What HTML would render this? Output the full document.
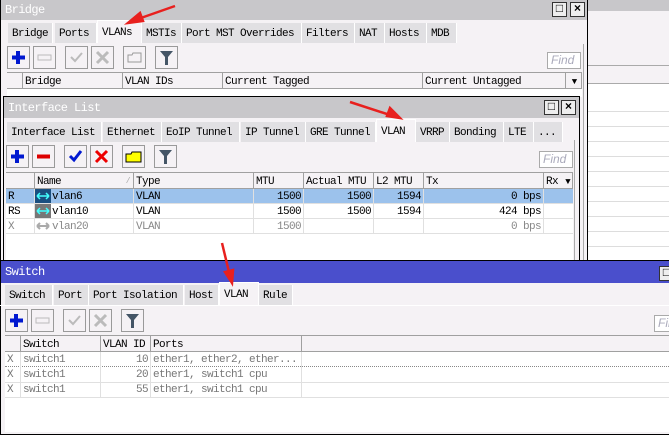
<!DOCTYPE html><html><head><style>
*{margin:0;padding:0;box-sizing:border-box}
body{width:669px;height:432px;overflow:hidden;background:#fff;position:relative;font-family:"Liberation Mono","Noto Sans CJK SC",monospace;font-size:11px;letter-spacing:-0.6px;color:#000}
.a{position:absolute}
.win{position:absolute;background:#f5f2f5;border:1px solid #000}
.tb{position:absolute;left:0;right:0;top:0;background:#c8c7ca;color:#fff;font-size:12px;padding-left:4px;line-height:22px;height:21px}
.tab{position:absolute;background:#e1e0e3;border-right:1px solid #fff;height:20px;line-height:22px;padding-left:4px;white-space:nowrap}
.tab.act{background:#f5f2f5;height:23px;line-height:24px;border:1px solid #fff;border-bottom:none}
.btn{position:absolute;width:23px;height:23px;border:1px solid #9a9a9a;background:#f5f2f5}
.hd{position:absolute;height:17px;border-right:1px solid #a0a0a0;border-bottom:1px solid #a0a0a0;border-top:1px solid #a0a0a0;background:#f5f2f5;line-height:18px;padding-left:2px;white-space:nowrap;overflow:hidden}
.c{position:absolute;height:15px;line-height:16px;border-right:1px solid #e0e0e0;padding:0 2px;white-space:nowrap;overflow:hidden}
.r{text-align:right}
.find{position:absolute;border:1px solid #aaa;background:#fff;color:#aab;font-family:"Liberation Sans",sans-serif;font-style:italic;font-size:12px;letter-spacing:0;padding-left:3px;line-height:15px;height:17px}
.wb{position:absolute;width:15px;height:15px;border:1px solid #333;background:#eee;font-size:12px;line-height:13px;text-align:center;font-weight:bold;letter-spacing:0}
.ic{display:inline-block;vertical-align:top;width:16px;height:14px;margin-right:1px}
</style></head><body>
<!-- background window right -->
<div class="a" style="left:588px;top:0;width:81px;height:11px;background:#c8c7ca"></div>
<div class="a" style="left:588px;top:11px;width:81px;height:54px;background:#f5f2f5"></div>
<div class="a" style="left:588px;top:65px;width:81px;height:1px;background:#aaa"></div>
<div class="a" style="left:588px;top:66px;width:81px;height:17px;background:#f5f2f5"></div>
<div class="a" style="left:588px;top:83px;width:81px;height:1px;background:#aaa"></div>
<div class="a" style="left:588px;top:97px;width:81px;height:150px;background:repeating-linear-gradient(#fff 0 14px,#ddd 14px 15px)"></div>

<!-- Bridge window -->
<div class="win" style="left:0;top:-2px;width:588px;height:266px">
<div class="tb" style="top:1px;height:20px;line-height:20px">Bridge</div>
<div class="wb" style="left:551px;top:3px">□</div><div class="wb" style="left:569px;top:3px">×</div>
<div class="tab" style="left:7px;top:24px;width:45px">Bridge</div>
<div class="tab" style="left:54px;top:24px;width:42px">Ports</div>
<div class="tab act" style="left:96px;top:21px;width:45px">VLANs</div>
<div class="tab" style="left:141px;top:24px;width:40px">MSTIs</div>
<div class="tab" style="left:181px;top:24px;width:120px">Port MST Overrides</div>
<div class="tab" style="left:301px;top:24px;width:53px">Filters</div>
<div class="tab" style="left:354px;top:24px;width:30px">NAT</div>
<div class="tab" style="left:384px;top:24px;width:42px">Hosts</div>
<div class="tab" style="left:426px;top:24px;width:30px">MDB</div>
</div>
<div class="a" style="left:583px;top:44px;width:1px;height:220px;background:#aaa"></div>
<div class="btn" style="left:7px;top:46px"><svg width="21" height="21"><path d="M10 4v13M4 10.5h13" stroke="#0018d0" stroke-width="4"/></svg></div>
<div class="btn" style="left:33px;top:46px"><svg width="21" height="21"><rect x="4" y="8" width="13" height="5" fill="none" stroke="#bbb"/></svg></div>
<div class="btn" style="left:65px;top:46px"><svg width="21" height="21"><path d="M5 10l4 4 7-8" fill="none" stroke="#bbb" stroke-width="2"/></svg></div>
<div class="btn" style="left:91px;top:46px"><svg width="21" height="21"><path d="M5 5l11 11M16 5L5 16" stroke="#bbb" stroke-width="3"/></svg></div>
<div class="btn" style="left:123px;top:46px"><svg width="21" height="21"><path d="M4 8h4l1-2h8v9H4z" fill="none" stroke="#999"/></svg></div>
<div class="btn" style="left:155px;top:46px"><svg width="21" height="21"><path d="M4 4h13l-5 6v8h-3v-8z" fill="#456"/></svg></div>
<div class="find" style="left:547px;top:52px;width:34px">Find</div>
<div class="hd" style="left:7px;top:72px;width:16px"></div>
<div class="hd" style="left:23px;top:72px;width:100px">Bridge</div>
<div class="hd" style="left:123px;top:72px;width:100px">VLAN IDs</div>
<div class="hd" style="left:223px;top:72px;width:200px">Current Tagged</div>
<div class="hd" style="left:423px;top:72px;width:143px">Current Untagged</div>
<div class="hd" style="left:566px;top:72px;width:16px;font-size:9px;text-align:center;letter-spacing:0">▼</div>
<div class="a" style="left:7px;top:89px;width:575px;height:8px;background:#fff"></div>

<!-- Interface List window -->
<div class="win" style="left:3px;top:96px;width:577px;height:170px">
<div class="tb">Interface List</div>
<div class="wb" style="left:540px;top:3px">□</div><div class="wb" style="left:557px;top:3px">×</div>
</div>
<div class="a" style="left:574px;top:140px;width:1px;height:120px;background:#aaa"></div>
<div class="tab" style="left:7px;top:122px;width:95px">Interface List</div>
<div class="tab" style="left:103px;top:122px;width:59px">Ethernet</div>
<div class="tab" style="left:162px;top:122px;width:78px">EoIP Tunnel</div>
<div class="tab" style="left:241px;top:122px;width:65px">IP Tunnel</div>
<div class="tab" style="left:306px;top:122px;width:70px">GRE Tunnel</div>
<div class="tab act" style="left:376px;top:119px;width:40px">VLAN</div>
<div class="tab" style="left:416px;top:122px;width:34px">VRRP</div>
<div class="tab" style="left:450px;top:122px;width:54px">Bonding</div>
<div class="tab" style="left:504px;top:122px;width:30px">LTE</div>
<div class="tab" style="left:534px;top:122px;width:29px">...</div>
<div class="btn" style="left:6px;top:145px"><svg width="21" height="21"><path d="M10 4v13M4 10.5h13" stroke="#0018d0" stroke-width="4"/></svg></div>
<div class="btn" style="left:32px;top:145px"><svg width="21" height="21"><path d="M4 10.5h13" stroke="#d00" stroke-width="4"/></svg></div>
<div class="btn" style="left:64px;top:145px"><svg width="21" height="21"><path d="M5 10l4 4 7-9" fill="none" stroke="#0018d0" stroke-width="3"/></svg></div>
<div class="btn" style="left:90px;top:145px"><svg width="21" height="21"><path d="M5 5l11 11M16 5L5 16" stroke="#e00" stroke-width="3"/></svg></div>
<div class="btn" style="left:122px;top:145px"><svg width="21" height="21"><path d="M3 8h5l1-2h9v10H3z" fill="#ff0" stroke="#000"/></svg></div>
<div class="btn" style="left:154px;top:145px"><svg width="21" height="21"><path d="M4 4h13l-5 6v8h-3v-8z" fill="#456"/></svg></div>
<div class="find" style="left:539px;top:151px;width:34px">Find</div>
<div class="hd" style="left:6px;top:172px;width:29px"></div>
<div class="hd" style="left:35px;top:172px;width:99px">Name<span style="position:absolute;right:3px;color:#aaa;font-size:8px">/</span></div>
<div class="hd" style="left:134px;top:172px;width:120px">Type</div>
<div class="hd" style="left:254px;top:172px;width:50px">MTU</div>
<div class="hd" style="left:304px;top:172px;width:70px">Actual MTU</div>
<div class="hd" style="left:374px;top:172px;width:50px">L2 MTU</div>
<div class="hd" style="left:424px;top:172px;width:120px">Tx</div>
<div class="hd" style="left:544px;top:172px;width:29px">Rx<span style="position:absolute;right:2px;font-size:9px">▼</span></div>
<div class="a" style="left:6px;top:189px;width:567px;height:71px;background:#fff"></div>
<div class="a" style="left:6px;top:189px;width:567px;height:15px;background:#9cc2ec"></div>
<div class="a" style="left:6px;top:203px;width:567px;height:1px;background:#e0e0e0"></div>
<div class="a" style="left:6px;top:218px;width:567px;height:1px;background:#e0e0e0"></div>
<div class="a" style="left:6px;top:233px;width:567px;height:1px;background:#e0e0e0"></div>
<div class="c" style="left:6px;top:189px;width:29px">R</div>
<div class="c" style="left:35px;top:189px;width:99px;padding:0"><svg class="ic"><rect width="16" height="14" fill="#1a4f80"/><path d="M2 7h12M2 7l3-3M2 7l3 3M14 7l-3-3M14 7l-3 3" stroke="#4ff" stroke-width="1.5" fill="none"/></svg>vlan6</div>
<div class="c" style="left:134px;top:189px;width:120px">VLAN</div>
<div class="c r" style="left:254px;top:189px;width:50px">1500</div>
<div class="c r" style="left:304px;top:189px;width:70px">1500</div>
<div class="c r" style="left:374px;top:189px;width:50px">1594</div>
<div class="c r" style="left:424px;top:189px;width:120px">0 bps</div>
<div class="c" style="left:6px;top:204px;width:29px">RS</div>
<div class="c" style="left:35px;top:204px;width:99px;padding:0"><svg class="ic"><rect width="16" height="14" fill="#777"/><path d="M2 7h12M2 7l3-3M2 7l3 3M14 7l-3-3M14 7l-3 3" stroke="#4ff" stroke-width="1.5" fill="none"/></svg>vlan10</div>
<div class="c" style="left:134px;top:204px;width:120px">VLAN</div>
<div class="c r" style="left:254px;top:204px;width:50px">1500</div>
<div class="c r" style="left:304px;top:204px;width:70px">1500</div>
<div class="c r" style="left:374px;top:204px;width:50px">1594</div>
<div class="c r" style="left:424px;top:204px;width:120px">424 bps</div>
<div style="color:#888">
<div class="c" style="left:6px;top:219px;width:29px">X</div>
<div class="c" style="left:35px;top:219px;width:99px;padding:0"><svg class="ic"><path d="M2 7h12M2 7l3-3M2 7l3 3M14 7l-3-3M14 7l-3 3" stroke="#aaa" stroke-width="2" fill="none"/></svg>vlan20</div>
<div class="c" style="left:134px;top:219px;width:120px">VLAN</div>
<div class="c r" style="left:254px;top:219px;width:50px">1500</div>
<div class="c r" style="left:304px;top:219px;width:70px"></div>
<div class="c r" style="left:374px;top:219px;width:50px"></div>
<div class="c r" style="left:424px;top:219px;width:120px">0 bps</div>
</div>

<!-- Switch window -->
<div class="win" style="left:0;top:260px;width:672px;height:175px">
<div class="tb" style="background:#4a4fcc;height:22px;line-height:22px">Switch</div>
<div class="wb" style="left:658px;top:5px">□</div>
</div>
<div class="a" style="left:0;top:305px;width:669px;height:1px;background:#fff"></div>
<div class="tab" style="left:5px;top:285px;width:48px">Switch</div>
<div class="tab" style="left:54px;top:285px;width:35px">Port</div>
<div class="tab" style="left:89px;top:285px;width:95px">Port Isolation</div>
<div class="tab" style="left:185px;top:285px;width:34px">Host</div>
<div class="tab act" style="left:219px;top:282px;width:40px">VLAN</div>
<div class="tab" style="left:259px;top:285px;width:34px">Rule</div>
<div class="btn" style="left:5px;top:309px"><svg width="21" height="21"><path d="M10 4v13M4 10.5h13" stroke="#0018d0" stroke-width="4"/></svg></div>
<div class="btn" style="left:31px;top:309px"><svg width="21" height="21"><rect x="4" y="8" width="13" height="5" fill="none" stroke="#bbb"/></svg></div>
<div class="btn" style="left:63px;top:309px"><svg width="21" height="21"><path d="M5 10l4 4 7-8" fill="none" stroke="#bbb" stroke-width="2"/></svg></div>
<div class="btn" style="left:89px;top:309px"><svg width="21" height="21"><path d="M5 5l11 11M16 5L5 16" stroke="#bbb" stroke-width="3"/></svg></div>
<div class="btn" style="left:121px;top:309px"><svg width="21" height="21"><path d="M4 4h13l-5 6v8h-3v-8z" fill="#456"/></svg></div>
<div class="find" style="left:654px;top:315px;width:30px">Find</div>
<div class="hd" style="left:5px;top:335px;width:16px"></div>
<div class="hd" style="left:21px;top:335px;width:80px">Switch</div>
<div class="hd" style="left:101px;top:335px;width:50px">VLAN ID</div>
<div class="hd" style="left:151px;top:335px;width:151px">Ports</div>
<div class="hd" style="left:302px;top:335px;width:370px"></div>
<div class="a" style="left:5px;top:352px;width:664px;height:80px;background:#fff"></div>
<div class="a" style="left:5px;top:366px;width:664px;border-top:1px dotted #888"></div>
<div class="a" style="left:5px;top:382px;width:664px;height:1px;background:#e0e0e0"></div>
<div class="a" style="left:5px;top:397px;width:664px;height:1px;background:#e0e0e0"></div>
<div style="color:#777">
<div class="c" style="left:5px;top:352px;width:16px">X</div><div class="c" style="left:21px;top:352px;width:80px">switch1</div><div class="c r" style="left:101px;top:352px;width:50px">10</div><div class="c" style="left:151px;top:352px;width:151px">ether1, ether2, ether...</div>
<div class="c" style="left:5px;top:367px;width:16px">X</div><div class="c" style="left:21px;top:367px;width:80px">switch1</div><div class="c r" style="left:101px;top:367px;width:50px">20</div><div class="c" style="left:151px;top:367px;width:151px">ether1, switch1 cpu</div>
<div class="c" style="left:5px;top:382px;width:16px">X</div><div class="c" style="left:21px;top:382px;width:80px">switch1</div><div class="c r" style="left:101px;top:382px;width:50px">55</div><div class="c" style="left:151px;top:382px;width:151px">ether1, switch1 cpu</div>
</div>

<!-- arrows -->
<svg class="a" style="left:0;top:0" width="669" height="432">
<g stroke="#e8201e" stroke-width="2.5" fill="#e8201e">
<line x1="175" y1="6" x2="138" y2="19"/><path d="M128 23l12-10 3 8z"/>
<line x1="350" y1="102" x2="390" y2="115"/><path d="M400 118l-13-2 3-8z"/>
<line x1="222" y1="243" x2="229" y2="272"/><path d="M232 283l-7-11 8-2z"/>
</g></svg>
</body></html>
